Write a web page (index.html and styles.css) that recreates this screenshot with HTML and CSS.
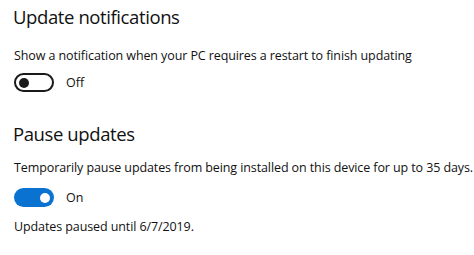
FILE: index.html
```html
<!DOCTYPE html>
<html>
<head>
<meta charset="utf-8">
<link rel="stylesheet" href="styles.css">
</head>
<body>
<div class="page">
  <section class="group first">
    <h2 class="title">Update notifications</h2>
    <p class="desc desc-wide">Show a notification when your PC requires a restart to finish updating</p>
    <div class="toggle-row">
      <span class="toggle off"><span class="knob"></span></span>
      <span class="state">Off</span>
    </div>
  </section>
  <section class="group second">
    <h2 class="title">Pause updates</h2>
    <p class="desc">Temporarily pause updates from being installed on this device for up to 35 days.</p>
    <div class="toggle-row">
      <span class="toggle on"><span class="knob"></span></span>
      <span class="state">On</span>
    </div>
    <p class="note">Updates paused until 6/7/2019.</p>
  </section>
</div>
</body>
</html>
```
FILE: styles.css
```css
html, body {
  margin: 0;
  padding: 0;
  background: #ffffff;
}
body {
  font-family: "Open Sans", "Noto Sans", sans-serif;
  color: #111111;
}
.page {
  padding: 0 0 0 13px;
  display: flex;
  flex-direction: column;
}
.group {
  display: flex;
  flex-direction: column;
}
.first {
  margin-top: 4px;
}
.second {
  margin-top: 29px;
}
.title {
  margin: 0;
  font-size: 18.5px;
  letter-spacing: -0.4px;
  font-weight: 400;
  line-height: 26px;
}
.desc {
  margin: 12px 0 0 1px;
  font-size: 12.5px;
  letter-spacing: -0.1px;
  line-height: 18px;
  white-space: nowrap;
}
.desc-wide {
  margin-top: 17px;
}
.toggle-row {
  display: flex;
  align-items: center;
  gap: 12px;
  margin: 8px 0 0 1px;
}
.second .toggle-row {
  margin-top: 11px;
}
.toggle {
  box-sizing: border-box;
  flex: none;
  width: 40px;
  height: 19px;
  border-radius: 10px;
  display: flex;
  align-items: center;
}
.toggle.off {
  border: 2px solid #1a1a1a;
  justify-content: flex-start;
  padding: 0 2.5px;
}
.toggle.on {
  background: #0a72d1;
  justify-content: flex-end;
  padding: 0 4.5px;
}
.knob {
  width: 10px;
  height: 10px;
  border-radius: 50%;
}
.off .knob { background: #1a1a1a; }
.on .knob { background: #ffffff; }
.state {
  font-size: 12.5px;
  line-height: 18px;
}
.note {
  margin: 11px 0 0 1px;
  font-size: 12.5px;
  letter-spacing: -0.1px;
  line-height: 18px;
}
```
